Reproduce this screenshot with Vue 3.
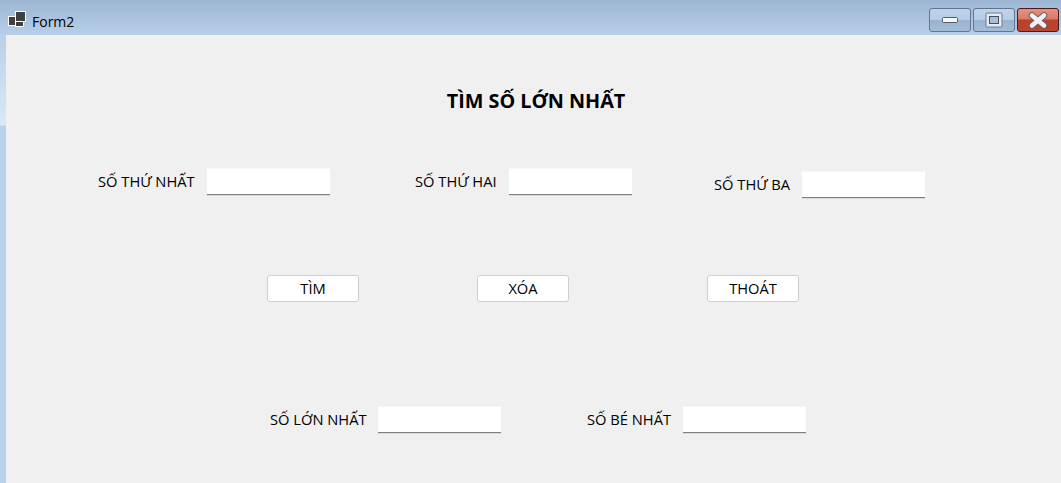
<template>
  <div class="window">
    <header class="titlebar">
      <div class="caption">
        <svg class="app-icon" width="18" height="18" viewBox="0 0 18 18">
          <rect x="7.5" y="1.5" width="10" height="10" fill="#3f3f3f" stroke="#fff" />
          <rect x="0.5" y="6.5" width="7" height="9" fill="#3f3f3f" stroke="#fff" />
          <rect x="7.5" y="11.5" width="8" height="5" fill="#3f3f3f" stroke="#fff" />
        </svg>
        <span>Form2</span>
      </div>
      <div class="controls">
        <div class="ctl">
          <svg width="18" height="8" viewBox="0 0 18 8">
            <rect x="1.5" y="1.5" width="15" height="5" rx="1" fill="#f6f7f9" stroke="#525c6c" />
          </svg>
        </div>
        <div class="ctl">
          <svg width="18" height="16" viewBox="0 0 18 16">
            <rect x="1" y="1" width="16" height="14" rx="1" fill="#e6e9ee" stroke="#6d7c90" />
            <rect x="4.5" y="4.5" width="9" height="7" fill="#a9bfd8" stroke="#46505f" />
          </svg>
        </div>
        <div class="ctl close">
          <svg width="20" height="17" viewBox="0 0 20 17">
            <g fill="none" stroke-linecap="round">
              <path d="M4 3.5l12 10M16 3.5l-12 10" stroke="#6a5f66" stroke-width="6.5" />
              <path d="M4 3.5l12 10M16 3.5l-12 10" stroke="#f0f1f3" stroke-width="4.5" />
            </g>
          </svg>
        </div>
      </div>
    </header>

    <main class="client">
      <h1 class="heading">TÌM SỐ LỚN NHẤT</h1>

      <section class="row inputs">
        <div v-for="f in topFields" :key="f.label" class="field" :class="f.cls">
          <label>{{ f.label }}</label>
          <div class="box"></div>
        </div>
      </section>

      <section class="row actions">
        <button v-for="b in buttons" :key="b" class="btn">{{ b }}</button>
      </section>

      <section class="row results">
        <div v-for="f in resultFields" :key="f.label" class="field" :class="f.cls">
          <label>{{ f.label }}</label>
          <div class="box"></div>
        </div>
      </section>
    </main>
  </div>
</template>

<script setup>
const topFields = [
  { label: 'SỐ THỨ NHẤT', cls: 'first' },
  { label: 'SỐ THỨ HAI', cls: 'second' },
  { label: 'SỐ THỨ BA', cls: 'third' },
];

const buttons = ['TÌM', 'XÓA', 'THOÁT'];

const resultFields = [
  { label: 'SỐ LỚN NHẤT', cls: 'biggest' },
  { label: 'SỐ BÉ NHẤT', cls: 'smallest' },
];
</script>

<style>
html,
body {
  margin: 0;
  overflow: hidden;
}
</style>

<style scoped>
.window {
  width: 1061px;
  height: 483px;
  display: flex;
  flex-direction: column;
  font-family: "Open Sans", "Noto Sans", sans-serif;
  color: #000;
  background: linear-gradient(to bottom, #b8d0ea 35px, #dbe8f6 125px, #b9d2ec 126px, #b9d2ec 100%);
}

.titlebar {
  height: 35px;
  flex: none;
  display: flex;
  justify-content: space-between;
  background: linear-gradient(to bottom, #9cb5d2, #b7cfe9);
}

.caption {
  display: flex;
  align-items: center;
  gap: 6px;
  padding: 7px 0 0 8px;
  box-sizing: border-box;
  font-size: 14px;
}

.app-icon {
  margin-top: -4px;
}

.controls {
  display: flex;
  gap: 2px;
  padding: 8px 2px 0 0;
}

.ctl {
  width: 42px;
  height: 24px;
  box-sizing: border-box;
  border: 1px solid #5f7690;
  border-radius: 3px;
  display: flex;
  align-items: center;
  justify-content: center;
  background: linear-gradient(to bottom, #bfd4ea 0, #b6cde6 48%, #9ab3cf 50%, #a3bcd6 100%);
}

.close {
  border-color: #4b1a1f;
  background: linear-gradient(to bottom, #e2917f 0, #d97c68 45%, #b9412a 50%, #b9462f 100%);
}

.client {
  flex: 1;
  margin-left: 6px;
  background: #f0f0f0;
  display: flex;
  flex-direction: column;
}

.heading {
  margin: 52px 0 0;
  height: 27px;
  line-height: 27px;
  font-size: 19.8px;
  font-weight: 700;
  text-align: center;
  padding-left: 5px;
}

.row {
  display: flex;
}

.inputs {
  margin-top: 54px;
  height: 30px;
  padding-left: 92px;
}

.actions {
  margin-top: 77px;
  padding-left: 261px;
}

.btn + .btn {
  margin-left: 118px;
}

.btn:last-child {
  margin-left: 138px;
}

.results {
  margin-top: 104px;
  padding-left: 264px;
}

.field {
  display: flex;
  align-items: center;
  height: 27px;
}

.field label {
  font-size: 14.7px;
  white-space: nowrap;
  padding-bottom: 2px;
}

.box {
  width: 123px;
  height: 27px;
  box-sizing: border-box;
  background: #fff;
  border-top: 1px solid #f6f6f6;
  border-bottom: 1px solid #808080;
  box-shadow: 0 1px 0 #d8d8d8;
}

.first {
  width: 317px;
}
.first label {
  width: 109px;
}

.second {
  width: 299px;
}
.second label {
  width: 94px;
}

.third {
  margin-top: 3px;
}
.third label {
  width: 88px;
}

.biggest {
  width: 317px;
}
.biggest label {
  width: 108px;
}

.smallest label {
  width: 96px;
}

.btn {
  width: 92px;
  height: 27px;
  padding: 0 0 2px;
  box-sizing: border-box;
  background: #fff;
  border: 1px solid #cfcfcf;
  border-radius: 3px;
  font-family: inherit;
  font-size: 14.7px;
  color: #000;
}
</style>
